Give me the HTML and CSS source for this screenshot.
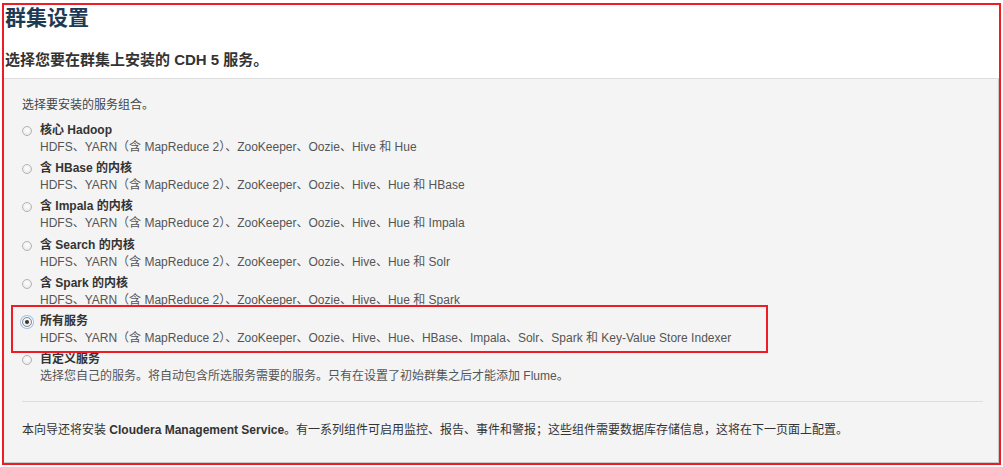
FILE: index.html
```html
<!DOCTYPE html>
<html lang="zh-CN">
<head>
<meta charset="utf-8">
<title>群集设置</title>
<link rel="stylesheet" href="styles.css">
</head>
<body>
<div class="frame">
  <div class="header">
    <h1 class="title">群集设置</h1>
    <h2 class="subtitle">选择您要在群集上安装的 CDH 5 服务。</h2>
  </div>
  <div class="panel">
    <p class="intro">选择要安装的服务组合。</p>
    <ul class="options">
      <li class="option">
        <span class="radio"></span>
        <div class="option-text">
          <div class="option-label">核心 Hadoop</div>
          <div class="option-desc">HDFS、YARN（含 MapReduce 2）、ZooKeeper、Oozie、Hive 和 Hue</div>
        </div>
      </li>
      <li class="option">
        <span class="radio"></span>
        <div class="option-text">
          <div class="option-label">含 HBase 的内核</div>
          <div class="option-desc">HDFS、YARN（含 MapReduce 2）、ZooKeeper、Oozie、Hive、Hue 和 HBase</div>
        </div>
      </li>
      <li class="option">
        <span class="radio"></span>
        <div class="option-text">
          <div class="option-label">含 Impala 的内核</div>
          <div class="option-desc">HDFS、YARN（含 MapReduce 2）、ZooKeeper、Oozie、Hive、Hue 和 Impala</div>
        </div>
      </li>
      <li class="option">
        <span class="radio"></span>
        <div class="option-text">
          <div class="option-label">含 Search 的内核</div>
          <div class="option-desc">HDFS、YARN（含 MapReduce 2）、ZooKeeper、Oozie、Hive、Hue 和 Solr</div>
        </div>
      </li>
      <li class="option">
        <span class="radio"></span>
        <div class="option-text">
          <div class="option-label">含 Spark 的内核</div>
          <div class="option-desc">HDFS、YARN（含 MapReduce 2）、ZooKeeper、Oozie、Hive、Hue 和 Spark</div>
        </div>
      </li>
      <li class="option highlighted">
        <span class="radio checked"></span>
        <div class="option-text">
          <div class="option-label">所有服务</div>
          <div class="option-desc">HDFS、YARN（含 MapReduce 2）、ZooKeeper、Oozie、Hive、Hue、HBase、Impala、Solr、Spark 和 Key-Value Store Indexer</div>
        </div>
      </li>
      <li class="option">
        <span class="radio"></span>
        <div class="option-text">
          <div class="option-label">自定义服务</div>
          <div class="option-desc">选择您自己的服务。将自动包含所选服务需要的服务。只有在设置了初始群集之后才能添加 Flume。</div>
        </div>
      </li>
    </ul>
    <p class="footer-note">本向导还将安装 <strong>Cloudera Management Service</strong>。有一系列组件可启用监控、报告、事件和警报；这些组件需要数据库存储信息，这将在下一页面上配置。</p>
  </div>
</div>
</body>
</html>
```

FILE: styles.css
```css
* { box-sizing: border-box; }

html, body {
  margin: 0;
  padding: 0;
  background: #ffffff;
}

body {
  padding: 3px 2px 2px 2px;
  font-family: "Liberation Sans", "Noto Sans CJK SC", sans-serif;
  color: #333333;
}

.frame {
  width: 999px;
  height: 462px;
  border: 2px solid #ee1c25;
  display: flex;
  flex-direction: column;
  background: #f4f4f4;
  box-shadow: inset -1px -1px 0 #c8c8c8;
}

.header {
  background: #ffffff;
  padding: 1px 0 8px 1px;
  border-bottom: 1px solid #dddddd;
}

.title {
  margin: 0;
  font-size: 21px;
  line-height: 24px;
  font-weight: bold;
  color: #1d3a55;
}

.subtitle {
  margin: 20px 0 0 0;
  font-size: 15px;
  line-height: 20px;
  font-weight: bold;
  color: #333333;
}

.panel {
  flex: 1;
  padding: 17px 16px 0 18px;
}

.intro {
  margin: 0;
  font-size: 12px;
  line-height: 18px;
  color: #444444;
}

.options {
  list-style: none;
  margin: 8px 0 0 0;
  padding: 0 0 16px 0;
  border-bottom: 1px solid #dddddd;
  display: flex;
  flex-direction: column;
  gap: 4.2px;
}

.option {
  display: flex;
  align-items: flex-start;
  gap: 8px;
}

.radio {
  flex: none;
  width: 10px;
  height: 10px;
  margin-top: 4px;
  border-radius: 50%;
  border: 1px solid #b3b3b3;
  background: radial-gradient(circle at 50% 40%, #ffffff 0%, #e3e3e3 100%);
  position: relative;
}

.radio.checked {
  border-color: #8a8a8a;
  box-shadow: 0 0 0 1px #ffffff, 0 0 0 2px #9fbfe6;
}

.radio.checked::after {
  content: "";
  position: absolute;
  left: 2px;
  top: 2px;
  width: 4px;
  height: 4px;
  border-radius: 50%;
  background: #333333;
}

.option-text {
  display: flex;
  flex-direction: column;
}

.option-label {
  font-size: 12px;
  line-height: 17px;
  font-weight: bold;
  color: #333333;
}

.option-desc {
  font-size: 12px;
  line-height: 17px;
  color: #555555;
}

.highlighted {
  position: relative;
}

.highlighted::after {
  content: "";
  position: absolute;
  left: -11px;
  top: -8px;
  width: 753px;
  height: 44px;
  border: 2px solid #ee1c25;
  pointer-events: none;
}

.footer-note {
  margin: 19px 0 0 0;
  font-size: 12px;
  line-height: 18px;
  color: #333333;
}

.footer-note strong {
  font-weight: bold;
}
```
